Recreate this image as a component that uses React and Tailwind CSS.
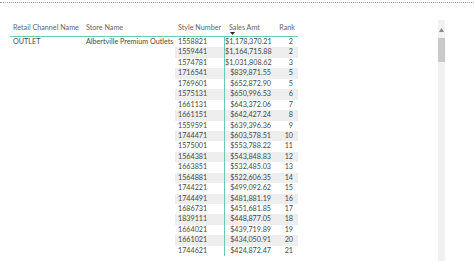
import React from 'react';

const rows = [
  ['1558821', '$1,178,370.21', '2'],
  ['1559441', '$1,164,715.88', '2'],
  ['1574781', '$1,031,808.62', '3'],
  ['1716541', '$839,871.55', '5'],
  ['1769601', '$652,872.90', '5'],
  ['1575131', '$650,996.53', '6'],
  ['1661131', '$643,372.06', '7'],
  ['1661151', '$642,427.24', '8'],
  ['1559591', '$639,396.36', '9'],
  ['1744471', '$603,578.51', '10'],
  ['1575001', '$553,788.22', '11'],
  ['1564381', '$543,848.83', '12'],
  ['1663851', '$532,485.03', '13'],
  ['1564881', '$522,606.35', '14'],
  ['1744221', '$499,092.62', '15'],
  ['1744491', '$481,881.19', '16'],
  ['1686731', '$451,681.85', '17'],
  ['1839111', '$448,877.05', '18'],
  ['1664021', '$439,719.89', '19'],
  ['1661021', '$434,050.91', '20'],
  ['1744621', '$424,872.47', '21'],
];

const App = () => {
  return (
    <div className="w-[474px] h-[261px] overflow-hidden bg-white text-[7.2px] text-[#4a4a4a] whitespace-nowrap" style={{ fontFamily: 'Lato, "Noto Sans", sans-serif' }}>
      <div className="pt-[2px]">
        <div className="border-t border-dotted border-[#9a9a9a]" />
      </div>
      <div className="flex pt-[17px]">
        <div className="ml-[10px] w-[288px] shrink-0">
          {/* header */}
          <div className="grid grid-cols-[73px_92px_50px_49px_24px] h-[17px] items-center text-[#666] border-b border-[#6cc8bb]">
            <div className="pl-[3px]">Retail Channel Name</div>
            <div className="pl-[3px]">Store Name</div>
            <div className="pl-[3px]">Style Number</div>
            <div className="pl-[4px] relative">
              Sales Amt
              <svg className="absolute left-[5px] top-[9px]" width="5" height="3" viewBox="0 0 5 3"><path d="M0 0h5L2.5 3z" fill="#222" /></svg>
            </div>
            <div className="pr-[3px] text-right">Rank</div>
          </div>
          {/* body */}
          {rows.map((r, i) => (
            <div key={r[0]} className="grid grid-cols-[73px_92px_123px] h-[10.45px] leading-[10.45px]">
              <div className="pl-[3px]">{i === 0 ? 'OUTLET' : ''}</div>
              <div className="pl-[3px]">{i === 0 ? 'Albertville Premium Outlets' : ''}</div>
              <div className={`grid grid-cols-[50px_49px_24px] ${i % 2 === 1 ? 'bg-[#eeeeee]' : ''}`}>
                <div className="pl-[3px] border-r border-[#6cc8bb]">{r[0]}</div>
                <div className="pr-[3px] text-right">{r[1]}</div>
                <div className="pr-[5px] text-right">{r[2]}</div>
              </div>
            </div>
          ))}
        </div>
        <div className="flex-1" />
        <div className="w-[7px] mr-[29px] h-[250px] bg-[#f1f1f1] flex flex-col items-center">
          <svg className="mt-[8px]" width="5" height="4" viewBox="0 0 5 4"><path d="M2.5 0L5 4H0z" fill="#8a8a8a" /></svg>
          <div className="mt-[6px] w-[7px] h-[24px] bg-[#c9c9c9]" />
        </div>
      </div>
    </div>
  );
};

export default App;
